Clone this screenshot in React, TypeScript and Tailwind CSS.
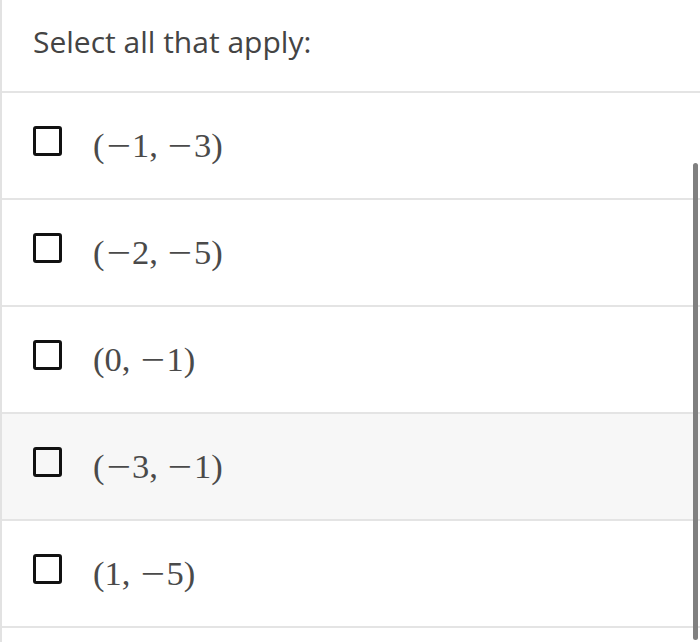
import React from "react";

const options: string[][] = [
  ["(", "-", "1, ", "-", "3)"],
  ["(", "-", "2, ", "-", "5)"],
  ["(0, ", "-", "1)"],
  ["(", "-", "3, ", "-", "1)"],
  ["(1, ", "-", "5)"],
];

function Expr({ parts }: { parts: string[] }) {
  return (
    <>
      {parts.map((p, i) =>
        p === "-" ? (
          <span key={i} className="inline-block mx-[4px] scale-x-[1.25]">
            {"\u2212"}
          </span>
        ) : (
          <span key={i} className="whitespace-pre">{p}</span>
        )
      )}
    </>
  );
}

export default function App() {
  return (
    <div className="relative w-[700px] h-[642px] bg-white overflow-hidden border-l-2 border-[#e2e2e2]">
      <div className="h-[93px] border-b-2 border-[#e4e4e4] pl-[31px] pt-[22px]">
        <span className="text-[30px] leading-[40px] text-[#444]" style={{ fontFamily: '"Open Sans", sans-serif' }}>
          Select all that apply:
        </span>
      </div>
      {options.map((o, i) => (
        <div
          key={i}
          className={`h-[107px] border-b-2 border-[#e4e4e4] flex items-center pl-[31px] ${i === 3 ? "bg-[#f7f7f7]" : "bg-white"}`}
        >
          <div className="w-[29px] h-[30px] border-[3px] border-[#111] rounded-[3px] mb-[10px] shrink-0" />
          <span
            className="ml-[31px] text-[34.5px] text-[#4a4a4a] leading-none"
            style={{ fontFamily: '"Liberation Serif", serif' }}
          >
            <Expr parts={o} />
          </span>
        </div>
      ))}
      <div className="absolute right-[2px] top-[163px] w-[5px] h-[477px] bg-[#808080] rounded-full" />
    </div>
  );
}
